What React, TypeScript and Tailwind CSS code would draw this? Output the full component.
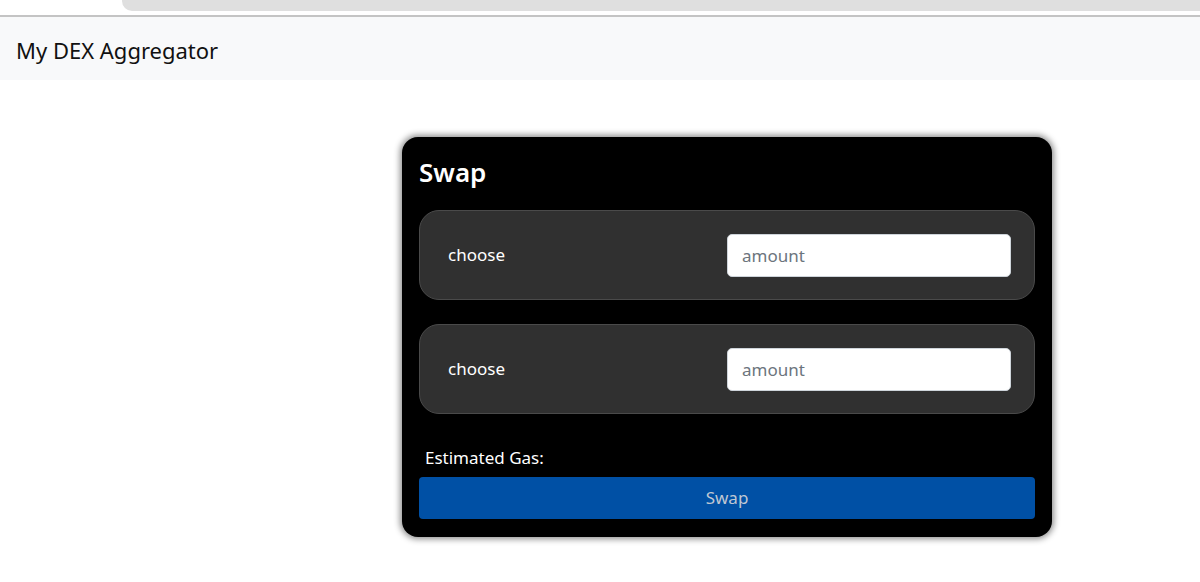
import React from 'react';

const font = { fontFamily: '"Segoe UI", "Noto Sans", "Open Sans", sans-serif' };

const TokenBox: React.FC = () => (
  <div className="flex h-[90px] items-center justify-between rounded-[20px] border border-[#4a4a4a] bg-[#303030] pl-[28px] pr-[23px]">
    <span className="text-[17px] text-white">choose</span>
    <input
      placeholder="amount"
      className="h-[43px] w-[284px] rounded-[5px] border border-[#ced4da] bg-white px-[14px] text-[17px] text-[#212529] outline-none placeholder:text-[#6c757d]"
    />
  </div>
);

export default function App() {
  return (
    <div className="min-h-[582px] bg-white" style={font}>
      {/* browser chrome remnant */}
      <div className="flex h-[17px] flex-col">
        <div className="flex h-[11px]">
          <div className="w-[122px] bg-white" />
          <div className="flex-1 rounded-bl-[10px] bg-[#dfdfdf]" />
        </div>
        <div className="h-[4px] bg-white" />
        <div className="h-[2px] bg-[#c4c4c4]" />
      </div>

      <nav className="flex h-[63px] items-center bg-[#f8f9fa] px-4 pt-[3px]">
        <span className="text-[22px] text-[#111]">My DEX Aggregator</span>
      </nav>

      <div className="flex justify-center pt-[57px] pl-[254px]">
        <div className="flex w-[650px] flex-col rounded-[16px] bg-black px-[17px] pt-[16px] pb-[18px] shadow-[0_0_6px_2px_rgba(0,0,0,0.45)]">
          <h2 className="mb-[19px] text-[26px] font-semibold leading-[38px] text-white">Swap</h2>
          <div className="flex flex-col gap-[24px]">
            <TokenBox />
            <TokenBox />
          </div>
          <div className="mt-[32px] pl-[6px] text-[17px] leading-[24px] text-white">Estimated Gas:</div>
          <button className="mt-[7px] h-[42px] w-full rounded-[4px] bg-[#0050a5] text-[17px] text-[#bfc7d3]">
            Swap
          </button>
        </div>
      </div>
    </div>
  );
}
